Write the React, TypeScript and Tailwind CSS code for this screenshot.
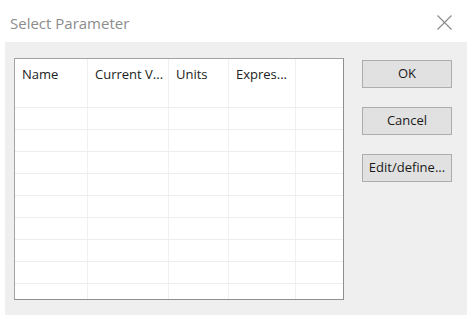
import React from 'react';

const cols = [
    { label: 'Name', w: 'w-[73px]' },
    { label: 'Current V...', w: 'w-[81px]' },
    { label: 'Units', w: 'w-[60px]' },
    { label: 'Expres...', w: 'w-[67px]' },
    { label: '', w: 'w-[48px]' },
];

const rows = Array.from({ length: 10 });

function DialogButton({ label }: { label: string }) {
    return (
        <button className="w-[90px] h-[28px] bg-[#e1e1e1] border border-[#adadad] text-[13px] text-[#1a1a1a] flex items-center justify-center">
            {label}
        </button>
    );
}

export default function App() {
    return (
        <div
            className="w-[474px] h-[325px] bg-white overflow-hidden"
            style={{ fontFamily: '"Open Sans", "Noto Sans", sans-serif' }}
        >
            {/* Title bar */}
            <div className="h-[42px] flex items-center justify-between pl-[10px] pr-[22px] pt-[5px]">
                <span className="text-[15px] text-[#8c8c8c]">Select Parameter</span>
                <svg width="15" height="15" viewBox="0 0 15 15" className="text-[#8a8a8a] mb-[2px]">
                    <path d="M0.5 0.5 L14.5 14.5 M14.5 0.5 L0.5 14.5" stroke="currentColor" strokeWidth="1.1" fill="none" />
                </svg>
            </div>

            {/* Body */}
            <div className="ml-[5px] w-[462px] h-[273px] bg-[#efefef] flex gap-[18px] pl-[9px] pt-[16px]">
                {/* Parameter list */}
                <div className="w-[330px] h-[242px] bg-white border border-[#a3a3a3] border-b-[#8f8f8f] border-r-[#8f8f8f] overflow-hidden">
                    <div className="flex h-[27px] text-[13px] text-[#222]">
                        {cols.map((c, i) => (
                            <div key={i} className={`${c.w} shrink-0 border-r border-[#f0f0f0] pl-[7px] pt-[6px] whitespace-nowrap leading-[18px]`}>
                                {c.label}
                            </div>
                        ))}
                    </div>
                    {rows.map((_, r) => (
                        <div key={r} className="flex h-[22px] border-b border-[#ededed]">
                            {cols.map((c, i) => (
                                <div key={i} className={`${c.w} shrink-0 border-r border-[#f0f0f0]`} />
                            ))}
                        </div>
                    ))}
                </div>

                {/* Buttons */}
                <div className="flex flex-col gap-[19px] pt-[2px]">
                    <DialogButton label="OK" />
                    <DialogButton label="Cancel" />
                    <DialogButton label="Edit/define..." />
                </div>
            </div>
        </div>
    );
}
